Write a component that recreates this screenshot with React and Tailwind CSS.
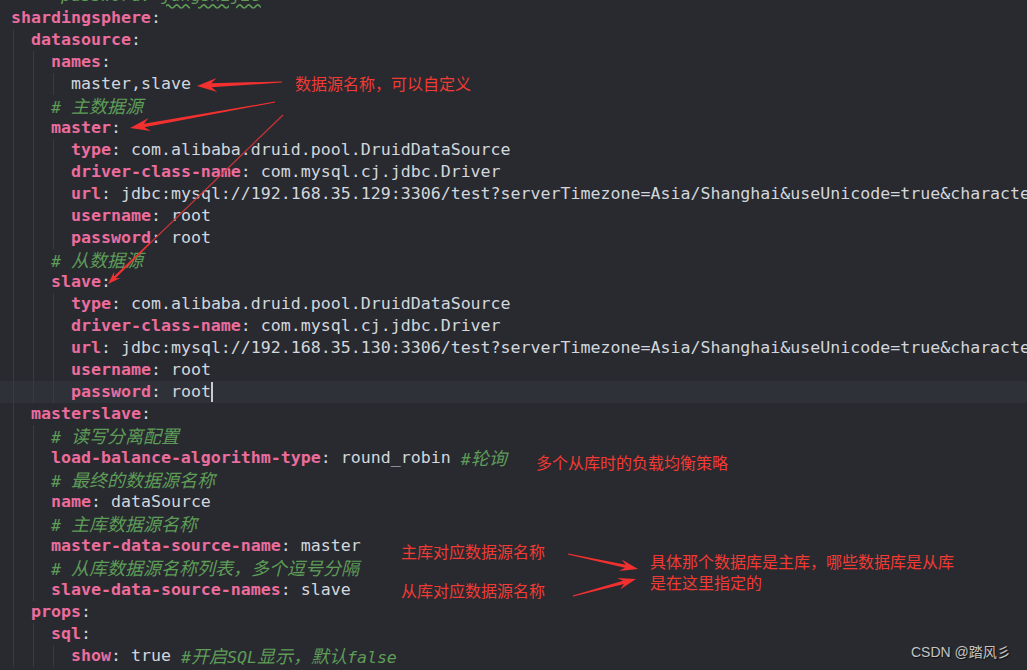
import React from "react";

const KEY = "text-[#ec6d9d] font-bold";
const VAL = "text-[#d3d6dc]";
const COM = "text-[#5e9c57] italic";

const cjkRe = /([\u2E80-\u9FFF\uFF00-\uFFEF\u3000-\u303F]+)/;
function Txt({ s }) {
  return s.split(cjkRe).map((part, i) =>
    i % 2 ? (
      <span key={i} className="font-['Noto_Sans_CJK_SC',sans-serif] text-[18px]">
        {part}
      </span>
    ) : (
      <React.Fragment key={i}>{part}</React.Fragment>
    )
  );
}

const lines = [
  { n: 0, k: "shardingsphere" },
  { n: 1, k: "datasource" },
  { n: 2, k: "names" },
  { n: 3, v: "master,slave" },
  { n: 2, c: "# 主数据源" },
  { n: 2, k: "master" },
  { n: 3, k: "type", v: "com.alibaba.druid.pool.DruidDataSource" },
  { n: 3, k: "driver-class-name", v: "com.mysql.cj.jdbc.Driver" },
  { n: 3, k: "url", v: "jdbc:mysql://192.168.35.129:3306/test?serverTimezone=Asia/Shanghai&useUnicode=true&characterEncoding=utf8" },
  { n: 3, k: "username", v: "root" },
  { n: 3, k: "password", v: "root" },
  { n: 2, c: "# 从数据源" },
  { n: 2, k: "slave" },
  { n: 3, k: "type", v: "com.alibaba.druid.pool.DruidDataSource" },
  { n: 3, k: "driver-class-name", v: "com.mysql.cj.jdbc.Driver" },
  { n: 3, k: "url", v: "jdbc:mysql://192.168.35.130:3306/test?serverTimezone=Asia/Shanghai&useUnicode=true&characterEncoding=utf8" },
  { n: 3, k: "username", v: "root" },
  { n: 3, k: "password", v: "root", cur: true },
  { n: 1, k: "masterslave" },
  { n: 2, c: "# 读写分离配置" },
  { n: 2, k: "load-balance-algorithm-type", v: "round_robin", c: "#轮询" },
  { n: 2, c: "# 最终的数据源名称" },
  { n: 2, k: "name", v: "dataSource" },
  { n: 2, c: "# 主库数据源名称" },
  { n: 2, k: "master-data-source-name", v: "master" },
  { n: 2, c: "# 从库数据源名称列表，多个逗号分隔" },
  { n: 2, k: "slave-data-source-names", v: "slave" },
  { n: 1, k: "props" },
  { n: 2, k: "sql" },
  { n: 3, k: "show", v: "true", c: "#开启SQL显示，默认false" },
];

function Line({ l }) {
  const guides = [];
  for (let i = 0; i < l.n; i++) {
    guides.push(
      <span key={i} className="w-[20px] shrink-0 pl-[2px] h-full">
        <span className="block h-full border-l border-[#383b43]" />
      </span>
    );
  }
  return (
    <div className={`flex h-[22px] items-center pl-[11px] whitespace-pre ${l.cur ? "bg-[#2f3139]" : ""}`}>
      {guides}
      <span className="flex items-center">
        {l.k && <span className={KEY}>{l.k}</span>}
        {l.k && <span className={VAL}>{l.v ? ": " : ":"}</span>}
        {l.v && <span className={VAL}>{l.v}</span>}
        {l.cur && <span className="inline-block w-[2px] h-[20px] bg-[#c8ccd2]" />}
        {l.v && l.c && <span className={VAL}> </span>}
        {l.c && (
          <span className={COM}>
            <Txt s={l.c} />
          </span>
        )}
      </span>
    </div>
  );
}

function arrowPts(tx, ty, px, py, head, hw, sw0, sw1) {
  const dx = px - tx, dy = py - ty;
  const len = Math.hypot(dx, dy);
  const ux = dx / len, uy = dy / len;
  const nx = -uy, ny = ux;
  const bx = px - ux * head, by = py - uy * head;
  const cx = px - ux * head * 0.72, cy = py - uy * head * 0.72;
  const p = [
    [tx + nx * sw0, ty + ny * sw0],
    [cx + nx * sw1, cy + ny * sw1],
    [bx + nx * hw, by + ny * hw],
    [px, py],
    [bx - nx * hw, by - ny * hw],
    [cx - nx * sw1, cy - ny * sw1],
    [tx - nx * sw0, ty - ny * sw0],
  ];
  return p.map((q) => q[0].toFixed(1) + "," + q[1].toFixed(1)).join(" ");
}

function Arrows() {
  const red = "#f23030";
  return (
    <svg className="absolute inset-0 pointer-events-none" width="1027" height="670" viewBox="0 0 1027 670">
      <polygon points={arrowPts(282, 82, 197, 86, 20, 7, 0.6, 2)} fill={red} />
      <polygon points={arrowPts(275, 102, 130, 128, 20, 6.5, 0.4, 1.8)} fill={red} />
      <line x1="283" y1="115" x2="114" y2="278" stroke="#c83236" strokeWidth="1.3" />
      <polygon points={arrowPts(150, 243, 108, 284, 13, 4.5, 0.6, 1.2)} fill={red} />
      <polygon points={arrowPts(568, 554, 638, 569, 18, 6, 0.6, 1.6)} fill={red} />
      <polygon points={arrowPts(573, 596, 636, 579, 18, 6, 0.6, 1.6)} fill={red} />
    </svg>
  );
}

export default function App() {
  const ann = "absolute whitespace-nowrap text-[16px] leading-[21px] text-[#f23a34] font-['Noto_Sans_CJK_SC',sans-serif]";
  return (
    <div className="relative w-[1027px] h-[670px] overflow-hidden bg-[#282a30] font-['DejaVu_Sans_Mono',monospace] text-[16.6px] leading-[22px]">
      <div className="flex flex-col -mt-[15px]">
        <div className="flex h-[22px] items-center pl-[61px] whitespace-pre">
          <span className={COM}>password: </span>
          <span className={`${COM} underline decoration-wavy decoration-[#5e9c57] underline-offset-2`}>jungshijie</span>
        </div>
        {lines.map((l, i) => (
          <Line key={i} l={l} />
        ))}
      </div>

      <Arrows />

      <div className={`${ann} left-[295px] top-[73px]`}>数据源名称，可以自定义</div>
      <div className={`${ann} left-[536px] top-[452px]`}>多个从库时的负载均衡策略</div>
      <div className={`${ann} left-[401px] top-[541px]`}>主库对应数据源名称</div>
      <div className={`${ann} left-[401px] top-[580px]`}>从库对应数据源名称</div>
      <div className={`${ann} left-[650px] top-[551px]`}>具体那个数据库是主库，哪些数据库是从库</div>
      <div className={`${ann} left-[650px] top-[572px]`}>是在这里指定的</div>
      <div className="absolute left-[911px] top-[642px] whitespace-nowrap text-[14px] leading-[20px] text-[#c4c4c4] font-['Liberation_Sans','Noto_Sans_CJK_SC',sans-serif] [text-shadow:1px_1px_1px_#111]">
        CSDN @踏风彡
      </div>
    </div>
  );
}
